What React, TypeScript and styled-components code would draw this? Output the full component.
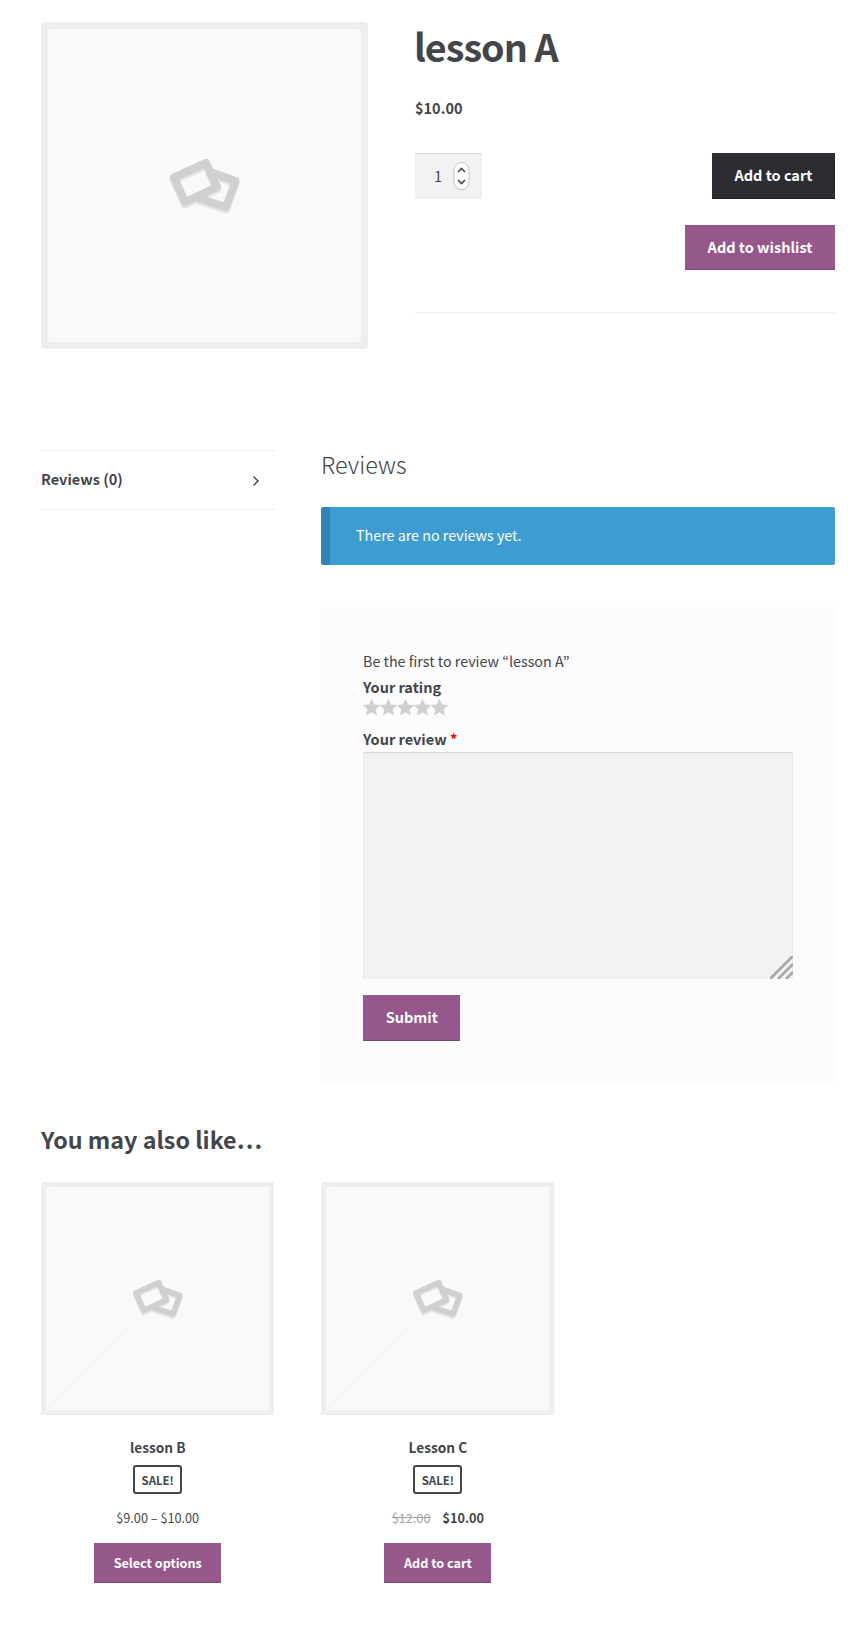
import styled, { createGlobalStyle } from "styled-components";

const GlobalStyle = createGlobalStyle`
  html, body {
    margin: 0;
    padding: 0;
    background: #fff;
  }
  body {
    font-family: "Noto Sans CJK KR", "Noto Sans", sans-serif;
    font-size: 14.5px;
    line-height: 26px;
    color: #43454b;
  }
  * {
    box-sizing: border-box;
  }
`;

const Page = styled.div`
  display: flex;
  flex-direction: column;
  padding: 22px 27px 49px 41px;
`;

const ProductTop = styled.section`
  display: grid;
  grid-template-columns: 327px 420px;
  column-gap: 47px;
`;

const Summary = styled.div`
  display: flex;
  flex-direction: column;
`;

const Title = styled.h1`
  margin: -2px 0 0 -1px;
  font-size: 37.7px;
  line-height: 51px;
  font-weight: 700;
  letter-spacing: -1px;
`;

const Price = styled.p`
  margin: 24px 0 0;
  font-weight: 700;
`;

const CartRow = styled.div`
  display: flex;
  justify-content: space-between;
  margin-top: 32px;
`;

const QtyBox = styled.div`
  display: flex;
  align-items: center;
  width: 67px;
  height: 46px;
  padding-left: 19px;
  gap: 11px;
  background: #f2f2f2;
  border-radius: 2px;
  box-shadow: inset 0 1px 1px rgba(0, 0, 0, 0.125);
`;

const Button = styled.button<{ $dark?: boolean; $small?: boolean }>`
  display: inline-block;
  height: ${(p) => (p.$small ? "40px" : "46px")};
  padding: 0 ${(p) => (p.$small ? "19.6px" : "22.65px")};
  border: 0;
  border-bottom: 1px solid ${(p) => (p.$dark ? "#1f2025" : "#7c4671")};
  border-radius: 0;
  background: ${(p) => (p.$dark ? "#2c2d33" : "#96588a")};
  color: #fff;
  font-family: inherit;
  font-size: ${(p) => (p.$small ? "12.6px" : "14.5px")};
  font-weight: 700;
  line-height: 1;
`;

const WishlistButton = styled(Button)`
  height: 45px;
`;

const WishRow = styled.div`
  display: flex;
  justify-content: flex-end;
  margin-top: 26px;
`;

const SummaryRule = styled.hr`
  width: 100%;
  height: 1px;
  margin: 42px 0 0;
  border: 0;
  background: #eeeeee;
`;

const ReviewsArea = styled.section`
  display: grid;
  grid-template-columns: 234px 514px;
  column-gap: 46px;
  margin-top: 101px;
`;

const TabItem = styled.div`
  display: flex;
  align-items: center;
  justify-content: space-between;
  height: 60px;
  padding-right: 15px;
  border-top: 1px solid #eeeeee;
  border-bottom: 1px solid #eeeeee;
  font-weight: 700;
  align-self: start;
`;

const TabLabel = styled.span`
  margin-bottom: 2px;
`;

const TabChevron = styled.svg`
  margin-top: 2px;
`;

const ReviewsColumn = styled.div`
  display: flex;
  flex-direction: column;
`;

const ReviewsHeading = styled.h2`
  margin: 0;
  font-size: 23.4px;
  line-height: 28px;
  font-weight: 300;
`;

const Notice = styled.div`
  margin-top: 29px;
  height: 58px;
  display: flex;
  align-items: center;
  padding: 0 0 2px 26px;
  background: #3d9cd2;
  border-left: 9px solid #2f84b5;
  border-radius: 2px;
  color: #fff;
  font-size: 14.3px;
`;

const ReviewForm = styled.div`
  display: flex;
  flex-direction: column;
  margin-top: 42px;
  height: 476px;
  padding: 41px 42px 42px;
  background: #fcfcfc;
`;

const Lead = styled.p`
  margin: 0;
  font-size: 14.3px;
`;

const FieldLabel = styled.label`
  display: block;
  font-weight: 700;
`;

const Required = styled.span`
  color: #f00;
`;

const Stars = styled.div`
  display: flex;
  height: 17px;
  margin: -1px 0 10px;
`;

const TextareaWrap = styled.div`
  position: relative;
  height: 227px;
`;

const ReviewInput = styled.textarea`
  display: block;
  width: 100%;
  height: 100%;
  padding: 10px;
  border: 0;
  border-radius: 2px;
  background: #f2f2f2;
  box-shadow: inset 0 1px 1px rgba(0, 0, 0, 0.125), inset 0 0 1px rgba(0, 0, 0, 0.1);
  resize: none;
  outline: none;
`;

const ResizeHandle = styled.svg`
  position: absolute;
  right: 0;
  bottom: 0;
`;

const SubmitRow = styled.div`
  margin-top: 16px;
`;

const Related = styled.section`
  display: flex;
  flex-direction: column;
  margin-top: 41px;
`;

const RelatedHeading = styled.h2`
  margin: 0;
  font-size: 23.3px;
  line-height: 30px;
  font-weight: 700;
`;

const ProductGrid = styled.div`
  display: grid;
  grid-template-columns: 233.4px 233.4px;
  column-gap: 46.8px;
  margin-top: 28px;
`;

const Card = styled.article`
  display: flex;
  flex-direction: column;
  align-items: center;
`;

const CardTitle = styled.h3`
  margin: 19px 0 0;
  font-size: 13.7px;
  line-height: 26px;
  font-weight: 700;
`;

const SaleBadge = styled.span`
  margin-top: 5px;
  width: 49px;
  height: 29px;
  display: flex;
  align-items: center;
  justify-content: center;
  border: 2px solid #43454b;
  border-radius: 3px;
  font-size: 11.4px;
  font-weight: 700;
`;

const CardPrice = styled.div`
  display: flex;
  gap: 12px;
  margin: 11px 0 12px;
  font-size: 12.7px;
  line-height: 26px;
`;

const OldPrice = styled.del`
  opacity: 0.5;
`;

const SalePrice = styled.strong`
  font-weight: 700;
`;

const PlaceholderArt = styled.svg`
  display: block;
  width: 100%;
  height: auto;
`;

const Placeholder = ({ lineWidth = 1 }: { lineWidth?: number }) => (
  <PlaceholderArt viewBox="0 0 327 327">
    <rect width="327" height="327" rx="4" fill="#eeeeee" />
    <rect x="7" y="7" width="313" height="313" fill="#f9f9f9" />
    <g stroke="#f2f2f2" strokeWidth={lineWidth}>
      <path d="M7 7 130 130M320 7 197 130M7 320 130 197M320 320 197 197" />
    </g>
    <g fill="none" strokeLinejoin="round" strokeWidth="8">
      <g stroke="#e4e4e4" transform="translate(0 2.5)">
        <path d="M170 150 194.5 159 185 185 157 176" />
        <path d="M133 155.5 165 141 176 165 144 180Z" />
      </g>
      <path stroke="#d0d0d0" d="M170 150 194.5 159 185 185 157 176" />
      <path stroke="#d0d0d0" d="M133 155.5 165 141 176 165 144 180Z" />
    </g>
  </PlaceholderArt>
);

const Star = () => (
  <svg width="17" height="17" viewBox="0 0 24 24">
    <path
      fill="#cfcfcf"
      stroke="#cfcfcf"
      strokeLinejoin="round"
      d="M12 .7 15.29 8.17 23.4 9 17.33 14.43 19.05 22.4 12 18.3 4.95 22.4 6.67 14.43 .6 9 8.71 8.17Z"
    />
  </svg>
);

const App = () => {
  return (
    <Page>
      <GlobalStyle />
      <ProductTop>
        <Placeholder />
        <Summary>
          <Title>lesson A</Title>
          <Price>$10.00</Price>
          <CartRow>
            <QtyBox>
              1
              <svg width="17" height="29" viewBox="0 0 17 29">
                <rect x="1" y="1.5" width="15" height="27" rx="7.5" fill="#dddddd" />
                <rect x="1" y="0.5" width="15" height="27" rx="7.5" fill="#fff" stroke="#c4c4c4" />
                <path
                  d="M5 10 8.5 6.5 12 10M5 18 8.5 21.5 12 18"
                  fill="none"
                  stroke="#43454b"
                  strokeWidth="1.6"
                />
              </svg>
            </QtyBox>
            <Button $dark>Add to cart</Button>
          </CartRow>
          <WishRow>
            <WishlistButton>Add to wishlist</WishlistButton>
          </WishRow>
          <SummaryRule />
        </Summary>
      </ProductTop>

      <ReviewsArea>
        <TabItem>
          <TabLabel>Reviews (0)</TabLabel>
          <TabChevron width="8" height="12" viewBox="0 0 8 12">
            <path d="M1.5 1.5 6 6 1.5 10.5" fill="none" stroke="#43454b" strokeWidth="1.4" />
          </TabChevron>
        </TabItem>
        <ReviewsColumn>
          <ReviewsHeading>Reviews</ReviewsHeading>
          <Notice>There are no reviews yet.</Notice>
          <ReviewForm>
            <Lead>Be the first to review “lesson A”</Lead>
            <FieldLabel>Your rating</FieldLabel>
            <Stars>
              {[0, 1, 2, 3, 4].map((i) => (
                <Star key={i} />
              ))}
            </Stars>
            <FieldLabel>
              Your review <Required>*</Required>
            </FieldLabel>
            <TextareaWrap>
              <ReviewInput />
              <ResizeHandle width="23" height="23" viewBox="0 0 23 23">
                <path d="M0 23 23 0M8 23 23 8M16 23 23 16" stroke="#a8a8a8" strokeWidth="2.8" />
              </ResizeHandle>
            </TextareaWrap>
            <SubmitRow>
              <Button>Submit</Button>
            </SubmitRow>
          </ReviewForm>
        </ReviewsColumn>
      </ReviewsArea>

      <Related>
        <RelatedHeading>You may also like…</RelatedHeading>
        <ProductGrid>
          <Card>
            <Placeholder lineWidth={1.4} />
            <CardTitle>lesson B</CardTitle>
            <SaleBadge>SALE!</SaleBadge>
            <CardPrice>$9.00 – $10.00</CardPrice>
            <Button $small>Select options</Button>
          </Card>
          <Card>
            <Placeholder lineWidth={1.4} />
            <CardTitle>Lesson C</CardTitle>
            <SaleBadge>SALE!</SaleBadge>
            <CardPrice>
              <OldPrice>$12.00</OldPrice>
              <SalePrice>$10.00</SalePrice>
            </CardPrice>
            <Button $small>Add to cart</Button>
          </Card>
        </ProductGrid>
      </Related>
    </Page>
  );
};

export default App;
